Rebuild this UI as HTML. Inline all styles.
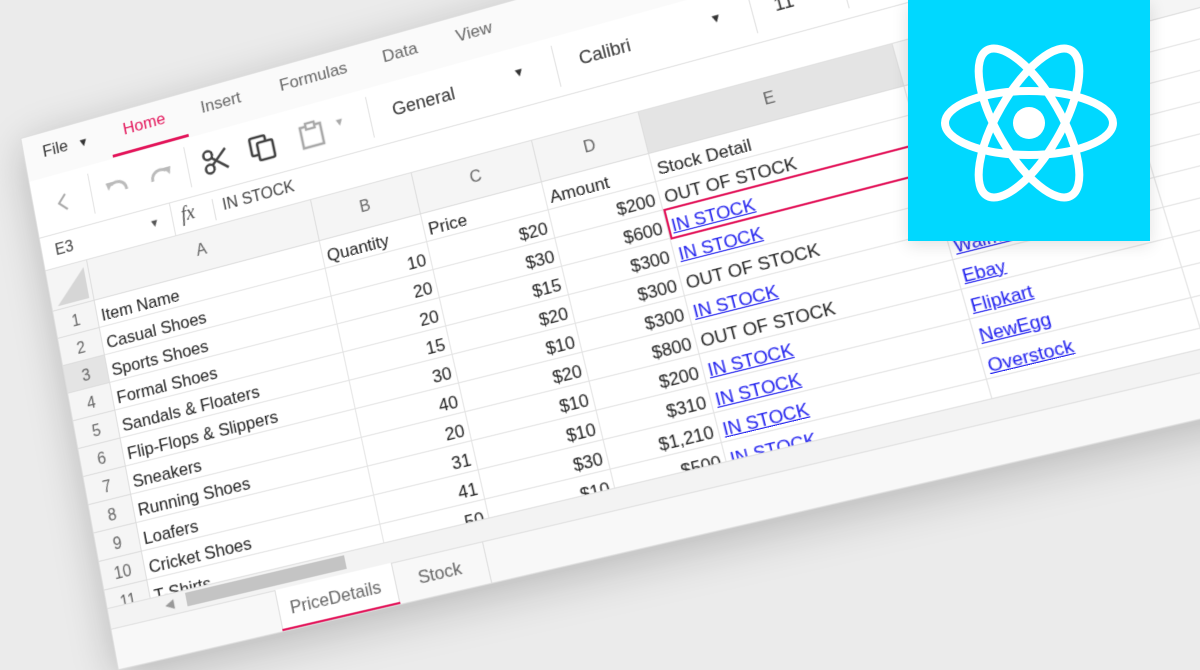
<!DOCTYPE html>
<html><head><style>
*{margin:0;padding:0;box-sizing:border-box}
body{width:1200px;height:630px;overflow:hidden;background:#ebebeb;font-family:"Liberation Sans",sans-serif;position:relative}
#sheet{position:absolute;left:48px;top:2px;width:1500px;height:540px;background:#fff;transform-origin:500px 250px;transform:perspective(1500px) rotateZ(-14.5deg) rotateY(-7deg) rotateX(9deg) scale(1.05);box-shadow:0 10px 40px rgba(0,0,0,.22);border:1px solid #ddd;overflow:hidden}
.a{position:absolute}
.tab{position:absolute;top:10px;font-size:17px;color:#666;white-space:nowrap}
.sep{position:absolute;top:54px;width:1px;height:42px;background:#e0e0e0}
.hd{position:absolute;top:140px;height:42px;background:#f5f5f5;border-right:1px solid #dcdcdc;border-bottom:1px solid #dcdcdc;color:#666;font-size:16px;text-align:center;line-height:42px}
.rn{position:absolute;left:0;width:45px;height:28px;background:#f5f5f5;border-bottom:1px solid #dcdcdc;border-right:1px solid #dcdcdc;color:#666;font-size:16px;text-align:center;line-height:32px}
.row{position:absolute;left:45px;width:1455px;height:28px;border-bottom:1px solid #e3e3e3}
.c{position:absolute;top:0;height:28px;border-right:1px solid #e3e3e3;padding:0 4px;font-size:17px;color:#222;line-height:34px;white-space:nowrap}
.r{text-align:right}
.lk{color:#1a1aee;text-decoration:underline}
.A{left:0;width:238px}.B{left:238px;width:104px}.C{left:342px;width:122px}.D{left:464px;width:106px}.E{left:570px;width:245px}.F{left:815px;width:190px}.G{left:1005px;width:150px}.H{left:1155px;width:150px}.I{left:1305px;width:150px}
</style></head><body>
<div id="sheet">
  <div class="a" style="left:0;top:0;width:1500px;height:46px;background:#fafafa"></div>
  <div class="tab" style="left:20px;color:#333">File <span style="font-size:12px;margin-left:6px">&#9660;</span></div>
  <div class="tab" style="left:108px;color:#e3165b">Home</div>
  <div class="a" style="left:92px;top:42px;width:82px;height:3px;background:#e3165b"></div>
  <div class="tab" style="left:192px">Insert</div>
  <div class="tab" style="left:276px">Formulas</div>
  <div class="tab" style="left:384px">Data</div>
  <div class="tab" style="left:460px">View</div>
  <div class="a" style="left:0;top:46px;width:1500px;height:60px;border-bottom:1px solid #e0e0e0;background:#fff"></div>
  <svg class="a" style="left:24px;top:66px" width="14" height="20"><path d="M11 2 L3 10 L11 18" fill="none" stroke="#aaa" stroke-width="2.2"/></svg>
  <div class="sep" style="left:62px"></div>
  <svg class="a" style="left:78px;top:66px" width="26" height="20"><path d="M6 6 C12 2 22 4 22 14" fill="none" stroke="#bbb" stroke-width="3"/><path d="M1 3 L9 3 L3 11 Z" fill="#bbb"/></svg>
  <svg class="a" style="left:124px;top:66px" width="26" height="20"><path d="M20 6 C14 2 4 4 4 14" fill="none" stroke="#bbb" stroke-width="3"/><path d="M25 3 L17 3 L23 11 Z" fill="#bbb"/></svg>
  <div class="sep" style="left:166px"></div>
  <svg class="a" style="left:182px;top:62px" width="28" height="28"><circle cx="7" cy="21" r="4.5" fill="none" stroke="#444" stroke-width="2.6"/><circle cx="7" cy="7" r="4.5" fill="none" stroke="#444" stroke-width="2.6"/><path d="M10 10 L26 24 M10 18 L26 4" stroke="#444" stroke-width="2.6"/></svg>
  <svg class="a" style="left:232px;top:62px" width="28" height="28"><rect x="2" y="2" width="16" height="18" rx="2" fill="none" stroke="#444" stroke-width="2.6"/><rect x="9" y="8" width="16" height="18" rx="2" fill="#fff" stroke="#444" stroke-width="2.6"/></svg>
  <svg class="a" style="left:284px;top:62px" width="28" height="28"><rect x="3" y="5" width="21" height="21" fill="none" stroke="#aaa" stroke-width="2.6"/><rect x="9" y="2" width="9" height="6" fill="#fff" stroke="#aaa" stroke-width="2.4"/></svg>
  <div class="a" style="left:322px;top:66px;font-size:11px;color:#aaa">&#9660;</div>
  <div class="sep" style="left:358px"></div>
  <div class="a" style="left:382px;top:64px;font-size:18px;color:#333">General</div>
  <div class="a" style="left:506px;top:64px;font-size:12px;color:#333">&#9660;</div>
  <div class="sep" style="left:548px"></div>
  <div class="a" style="left:572px;top:64px;font-size:18px;color:#333">Calibri</div>
  <div class="a" style="left:702px;top:64px;font-size:12px;color:#333">&#9660;</div>
  <div class="sep" style="left:742px"></div>
  <div class="a" style="left:764px;top:64px;font-size:18px;color:#333">11</div>
  <div class="a" style="left:800px;top:64px;font-size:12px;color:#333">&#9660;</div>
  <div class="sep" style="left:830px"></div>
  <div class="a" style="left:0;top:106px;width:1500px;height:34px;border-bottom:1px solid #e0e0e0"></div>
  <div class="a" style="left:14px;top:114px;font-size:16px;color:#444">E3</div>
  <div class="a" style="left:116px;top:116px;font-size:11px;color:#555">&#9660;</div>
  <div class="a" style="left:140px;top:106px;width:1px;height:34px;background:#e0e0e0"></div>
  <div class="a" style="left:150px;top:110px;font-size:20px;color:#555;font-family:'Liberation Serif',serif;font-style:italic">fx</div>
  <div class="a" style="left:184px;top:113px;width:1px;height:22px;background:#ddd"></div>
  <div class="a" style="left:194px;top:114px;font-size:16px;color:#444">IN STOCK</div>
  <div class="a" style="left:0;top:140px;width:45px;height:42px;background:#f5f5f5;border-right:1px solid #dcdcdc;border-bottom:1px solid #dcdcdc"></div>
  <svg class="a" style="left:6px;top:146px" width="34" height="32"><path d="M34 0 L34 32 L0 32 Z" fill="#d6d6d6"/></svg>
  <div class="hd" style="left:45px;width:238px">A</div>
  <div class="hd" style="left:283px;width:104px">B</div>
  <div class="hd" style="left:387px;width:122px">C</div>
  <div class="hd" style="left:509px;width:106px">D</div>
  <div class="hd" style="left:615px;width:245px;background:#e4e4e4">E</div>
  <div class="hd" style="left:860px;width:190px">F</div>
  <div class="hd" style="left:1050px;width:150px">G</div>
  <div class="hd" style="left:1200px;width:150px">H</div>
  <div class="hd" style="left:1350px;width:150px">I</div>
  <div class="a" style="left:0;top:182px;width:1500px;height:297px;overflow:hidden">
    <div class="rn" style="top:0">1</div><div class="rn" style="top:28px">2</div><div class="rn" style="top:56px;background:#e4e4e4">3</div><div class="rn" style="top:84px">4</div><div class="rn" style="top:112px">5</div><div class="rn" style="top:140px">6</div><div class="rn" style="top:168px">7</div><div class="rn" style="top:196px">8</div><div class="rn" style="top:224px">9</div><div class="rn" style="top:252px">10</div><div class="rn" style="top:280px">11</div>
    <div class="row" style="top:0"><div class="c A">Item Name</div><div class="c B">Quantity</div><div class="c C">Price</div><div class="c D">Amount</div><div class="c E">Stock Detail</div><div class="c F">Website</div><div class="c G"></div><div class="c H"></div><div class="c I"></div></div>
    <div class="row" style="top:28px"><div class="c A">Casual Shoes</div><div class="c B r">10</div><div class="c C r">$20</div><div class="c D r">$200</div><div class="c E">OUT OF STOCK</div><div class="c F lk">Amazon</div><div class="c G"></div><div class="c H"></div><div class="c I"></div></div>
    <div class="row" style="top:56px"><div class="c A">Sports Shoes</div><div class="c B r">20</div><div class="c C r">$30</div><div class="c D r">$600</div><div class="c E lk">IN STOCK</div><div class="c F lk">Overstock</div><div class="c G"></div><div class="c H"></div><div class="c I"></div></div>
    <div class="row" style="top:84px"><div class="c A">Formal Shoes</div><div class="c B r">20</div><div class="c C r">$15</div><div class="c D r">$300</div><div class="c E lk">IN STOCK</div><div class="c F lk">AliExpress</div><div class="c G"></div><div class="c H"></div><div class="c I"></div></div>
    <div class="row" style="top:112px"><div class="c A">Sandals &amp; Floaters</div><div class="c B r">15</div><div class="c C r">$20</div><div class="c D r">$300</div><div class="c E">OUT OF STOCK</div><div class="c F lk">Taobao</div><div class="c G"></div><div class="c H"></div><div class="c I"></div></div>
    <div class="row" style="top:140px"><div class="c A">Flip-Flops &amp; Slippers</div><div class="c B r">30</div><div class="c C r">$10</div><div class="c D r">$300</div><div class="c E lk">IN STOCK</div><div class="c F lk">Walmart</div><div class="c G"></div><div class="c H"></div><div class="c I"></div></div>
    <div class="row" style="top:168px"><div class="c A">Sneakers</div><div class="c B r">40</div><div class="c C r">$20</div><div class="c D r">$800</div><div class="c E">OUT OF STOCK</div><div class="c F lk">Ebay</div><div class="c G"></div><div class="c H"></div><div class="c I"></div></div>
    <div class="row" style="top:196px"><div class="c A">Running Shoes</div><div class="c B r">20</div><div class="c C r">$10</div><div class="c D r">$200</div><div class="c E lk">IN STOCK</div><div class="c F lk">Flipkart</div><div class="c G"></div><div class="c H"></div><div class="c I"></div></div>
    <div class="row" style="top:224px"><div class="c A">Loafers</div><div class="c B r">31</div><div class="c C r">$10</div><div class="c D r">$310</div><div class="c E lk">IN STOCK</div><div class="c F lk">NewEgg</div><div class="c G"></div><div class="c H"></div><div class="c I"></div></div>
    <div class="row" style="top:252px"><div class="c A">Cricket Shoes</div><div class="c B r">41</div><div class="c C r">$30</div><div class="c D r">$1,210</div><div class="c E lk">IN STOCK</div><div class="c F lk">Overstock</div><div class="c G"></div><div class="c H"></div><div class="c I"></div></div>
    <div class="row" style="top:280px"><div class="c A">T-Shirts</div><div class="c B r">50</div><div class="c C r">$10</div><div class="c D r">$500</div><div class="c E lk">IN STOCK</div><div class="c F"></div><div class="c G"></div><div class="c H"></div><div class="c I"></div></div>
    <div class="a" style="left:615px;top:55px;width:246px;height:30px;border:2px solid #e3165b"></div>
    <div class="a" style="left:856px;top:80px;width:8px;height:8px;background:#e3165b"></div>
  </div>
  <div class="a" style="left:0;top:479px;width:1500px;height:20px;background:#f3f3f3;border-top:1px solid #e0e0e0"></div>
  <div class="a" style="left:58px;top:482px;font-size:12px;color:#999">&#9664;</div>
  <div class="a" style="left:80px;top:482px;width:162px;height:13px;background:#c4c4c4"></div>
  <div class="a" style="left:0;top:499px;width:1500px;height:41px;background:#f8f8f8;border-top:1px solid #e0e0e0"></div>
  <div class="a" style="left:168px;top:499px;width:118px;height:41px;background:#fff;border-right:1px solid #ddd;border-left:1px solid #ddd"></div>
  <div class="a" style="left:180px;top:509px;font-size:17px;color:#666">PriceDetails</div>
  <div class="a" style="left:168px;top:536px;width:118px;height:3px;background:#e3165b"></div>
  <div class="a" style="left:286px;top:499px;width:90px;height:41px;border-right:1px solid #ddd"></div>
  <div class="a" style="left:308px;top:509px;font-size:17px;color:#666">Stock</div>
</div>
<div class="a" style="left:908px;top:0;width:242px;height:241px;background:#00d8ff;box-shadow:0 4px 16px rgba(0,0,0,.12)">
  <svg width="242" height="241" viewBox="0 0 242 241">
    <g transform="translate(121 123)" fill="none" stroke="#fff" stroke-width="8">
      <ellipse rx="84" ry="32"/>
      <ellipse rx="84" ry="32" transform="rotate(60)"/>
      <ellipse rx="84" ry="32" transform="rotate(120)"/>
    </g>
    <circle cx="121" cy="123" r="16" fill="#fff"/>
  </svg>
</div>
</body></html>
